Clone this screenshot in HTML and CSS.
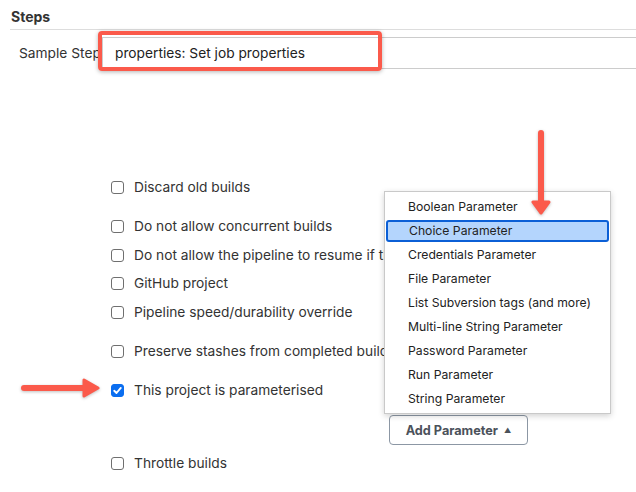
FILE: index.html
```html
<!DOCTYPE html>
<html>
<head>
<meta charset="utf-8">
<link rel="stylesheet" href="styles.css">
</head>
<body>
<div class="steps-head">Steps</div>
<div class="step-row">
  <div class="step-label">Sample Step</div>
  <div class="step-input">properties: Set job properties</div>
</div>

<div class="options">
  <div class="opt first"><span class="cb"></span><span class="lbl">Discard old builds</span></div>
  <div class="opt sep"><span class="cb"></span><span class="lbl">Do not allow concurrent builds</span></div>
  <div class="opt"><span class="cb"></span><span class="lbl">Do not allow the pipeline to resume if the controller restarts</span></div>
  <div class="opt tight"><span class="cb"></span><span class="lbl">GitHub project</span></div>
  <div class="opt"><span class="cb"></span><span class="lbl">Pipeline speed/durability override</span></div>
  <div class="opt sep"><span class="cb"></span><span class="lbl">Preserve stashes from completed builds</span></div>
  <div class="opt sep"><span class="cb checked"><svg viewBox="0 0 13 13" width="13" height="13"><path d="M3.2 6.8 L5.5 9 L9.8 3.9" fill="none" stroke="#fff" stroke-width="1.9" stroke-linecap="round" stroke-linejoin="round"/></svg></span><span class="lbl">This project is parameterised</span></div>
  <div class="add-row">
    <div class="add-wrap">
      <div class="menu">
        <div class="menu-item">Boolean Parameter</div>
        <div class="menu-item active">Choice Parameter</div>
        <div class="menu-item">Credentials Parameter</div>
        <div class="menu-item">File Parameter</div>
        <div class="menu-item">List Subversion tags (and more)</div>
        <div class="menu-item">Multi-line String Parameter</div>
        <div class="menu-item">Password Parameter</div>
        <div class="menu-item">Run Parameter</div>
        <div class="menu-item">String Parameter</div>
      </div>
      <button class="add-btn">Add Parameter <span class="caret">&#9650;</span></button>
    </div>
  </div>
  <div class="opt throttle"><span class="cb"></span><span class="lbl">Throttle builds</span></div>
</div>

<div class="highlight"></div>
<svg class="arrow-down" width="30" height="96" viewBox="0 0 30 96">
  <line x1="12" y1="6" x2="12" y2="76" stroke="#fb5a4b" stroke-width="6" stroke-linecap="round"/>
  <path d="M4 75 L20 75 L12 86 Z" fill="#fb5a4b" stroke="#fb5a4b" stroke-width="3" stroke-linejoin="round"/>
</svg>
<svg class="arrow-right" width="96" height="30" viewBox="0 0 96 30">
  <line x1="6" y1="12" x2="70" y2="12" stroke="#fb5a4b" stroke-width="6" stroke-linecap="round"/>
  <path d="M66 4 L66 20 L80 12 Z" fill="#fb5a4b" stroke="#fb5a4b" stroke-width="3" stroke-linejoin="round"/>
</svg>
</body>
</html>
```

FILE: styles.css
```css
html, body {
  margin: 0;
  padding: 0;
}
body {
  width: 636px;
  height: 492px;
  overflow: hidden;
  position: relative;
  background: #fff;
  font-family: Inter, "Noto Sans", sans-serif;
  color: #333;
  font-size: 13.75px;
}
.steps-head {
  margin-left: 10px;
  padding: 8px 0 0 1px;
  height: 21px;
  line-height: 18px;
  border-bottom: 1px solid #ddd;
  font-weight: 700;
  font-size: 14px;
  color: #333;
}
.step-row {
  display: flex;
  align-items: center;
  margin-top: 7px;
  margin-right: -20px;
}
.step-label {
  width: 83px;
  padding-left: 19px;
  white-space: nowrap;
  overflow: hidden;
  color: #333;
}
.step-input {
  flex: 1;
  height: 30px;
  line-height: 30px;
  border: 1px solid #ccc;
  padding-left: 12px;
  color: #222;
  background: #fff;
}
.options {
  margin-top: 108px;
  padding-left: 111px;
}
.opt {
  display: flex;
  align-items: center;
  gap: 10px;
  height: 20px;
  margin-top: 9px;
  white-space: nowrap;
}
.lbl {
  max-width: 250px;
  overflow: hidden;
}
.opt.first { margin-top: 0; }
.opt.sep { margin-top: 19px; }
.opt.tight { margin-top: 8px; }
.opt.throttle { margin-top: 8px; }
.cb {
  flex: none;
  box-sizing: border-box;
  width: 13px;
  height: 13px;
  border: 1px solid #6f6f6f;
  border-radius: 3px;
  background: #fff;
  display: flex;
}
.cb.checked {
  background: #0b6ef0;
  border-color: #0b6ef0;
}
.cb.checked svg {
  margin: -1px;
}
.add-row {
  margin-top: 15px;
  padding-left: 278px;
  height: 30px;
}
.add-wrap {
  position: relative;
  display: inline-block;
}
.add-btn {
  box-sizing: border-box;
  width: 139px;
  height: 30px;
  border: 1.5px solid #8c97a4;
  border-radius: 4px;
  background: #fff;
  font-family: Inter, "Noto Sans", sans-serif;
  font-weight: 700;
  font-size: 12.7px;
  color: #4b525b;
  display: flex;
  align-items: center;
  justify-content: center;
  gap: 6px;
  padding: 0;
}
.caret {
  font-size: 7px;
  line-height: 1;
}
.menu {
  position: absolute;
  left: -5px;
  bottom: calc(100% + 1px);
  box-sizing: border-box;
  width: 227px;
  height: 223px;
  padding: 3px 0 4px;
  background: #fff;
  border: 1px solid #c9c9c9;
  box-shadow: 0 2px 6px rgba(0,0,0,0.18);
  font-size: 12.2px;
  color: #222;
}
.menu-item {
  height: 24px;
  line-height: 24px;
  padding-left: 23px;
  white-space: nowrap;
}
.menu-item.active {
  box-sizing: border-box;
  margin: 1px 1px;
  height: 22px;
  line-height: 18px;
  padding-left: 21px;
  border: 2px solid #0b5fd6;
  border-radius: 3px;
  background: #b4d5fd;
}
.highlight {
  position: absolute;
  left: 98px;
  top: 31px;
  width: 276px;
  height: 32px;
  border: 4px solid #fb5a4b;
  border-radius: 4px;
  box-shadow: 0 1px 4px rgba(0,0,0,0.3);
}
.arrow-down {
  position: absolute;
  left: 529px;
  top: 127px;
  filter: drop-shadow(0 1px 1.5px rgba(0,0,0,0.25));
}
.arrow-right {
  position: absolute;
  left: 18px;
  top: 376px;
  filter: drop-shadow(0 1px 1.5px rgba(0,0,0,0.25));
}
```
